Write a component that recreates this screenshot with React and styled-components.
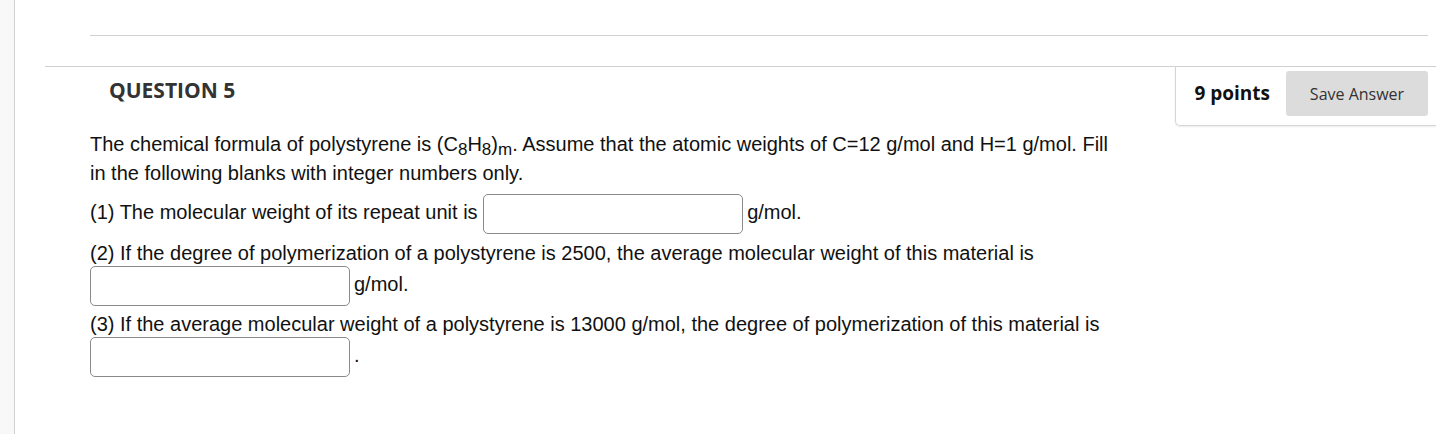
import React from "react";
import styled, { createGlobalStyle } from "styled-components";

const GlobalStyle = createGlobalStyle`
  html, body {
    margin: 0;
    padding: 0;
    background: #fff;
  }
  body {
    font-family: "Liberation Sans", Arial, sans-serif;
    color: #111;
  }
`;

const Page = styled.div`
  display: flex;
  min-height: 100vh;
`;

const Rail = styled.aside`
  flex: 0 0 14px;
  background: #f8f8f8;
  border-right: 1px solid #d0d0d0;
`;

const Main = styled.main`
  flex: 1;
  padding-top: 35px;
`;

const TopRule = styled.hr`
  margin: 0 8px 30px 75px;
  border: 0;
  border-top: 1px solid #d0d0d0;
`;

const Question = styled.section`
  margin-left: 30px;
  border-top: 1px solid #d0d0d0;
`;

const Header = styled.div`
  display: flex;
  justify-content: space-between;
  align-items: flex-start;
`;

const Title = styled.h3`
  margin: 9px 0 0 64px;
  font-family: "Open Sans", sans-serif;
  font-weight: 700;
  font-size: 21px;
  color: #333;
`;

const PointsBox = styled.div`
  display: flex;
  align-items: center;
  gap: 16px;
  padding: 4px 8px 9px 18px;
  margin-left: -3px;
  border-left: 1px solid #d6d6d6;
  border-bottom: 1px solid #d6d6d6;
  border-bottom-left-radius: 5px;
  box-shadow: 0 1px 2px rgba(0, 0, 0, 0.08);
`;

const Points = styled.span`
  font-family: "Open Sans", sans-serif;
  font-weight: 700;
  font-size: 19px;
  color: #111;
  margin-top: -2px;
`;

const SaveButton = styled.button`
  width: 142px;
  height: 45px;
  border: 0;
  border-radius: 3px;
  background: #dcdcdc;
  font-family: "Open Sans", sans-serif;
  font-size: 16px;
  color: #333;
`;

const Body = styled.div`
  width: 1030px;
  margin: 4px 0 0 45px;
  font-size: 20px;
  line-height: 26px;
  color: #111;
`;

const Para = styled.p`
  margin: 0 0 ${(p) => p.$gap ?? 6}px;
  line-height: ${(p) => p.$lh ?? 26}px;
`;

const Sub = styled.sub`
  font-size: 0.85em;
  vertical-align: -0.25em;
  line-height: 0;
`;

const Blank = styled.input`
  box-sizing: border-box;
  width: 260px;
  height: 40px;
  margin: 0 4px 0 0;
  border: 1px solid #8a8a8a;
  border-radius: 5px;
  vertical-align: middle;
  background: #fff;
`;

export default function App() {
  return (
    <>
      <GlobalStyle />
      <Page>
        <Rail />
        <Main>
          <TopRule />
          <Question>
            <Header>
              <Title>QUESTION 5</Title>
              <PointsBox>
                <Points>9 points</Points>
                <SaveButton>Save Answer</SaveButton>
              </PointsBox>
            </Header>
            <Body>
              <Para $lh={29}>
                The chemical formula of polystyrene is (C<Sub>8</Sub>H<Sub>8</Sub>)<Sub>m</Sub>. Assume that the
                atomic weights of C=12 g/mol and H=1 g/mol. Fill in the following blanks with integer numbers only.
              </Para>
              <Para>
                (1) The molecular weight of its repeat unit is <Blank />g/mol.
              </Para>
              <Para $gap={5}>
                (2) If the degree of polymerization of a polystyrene is 2500, the average molecular weight of this
                material is <Blank />g/mol.
              </Para>
              <Para>
                (3) If the average molecular weight of a polystyrene is 13000 g/mol, the degree of polymerization of
                this material is <Blank />.
              </Para>
            </Body>
          </Question>
        </Main>
      </Page>
    </>
  );
}
